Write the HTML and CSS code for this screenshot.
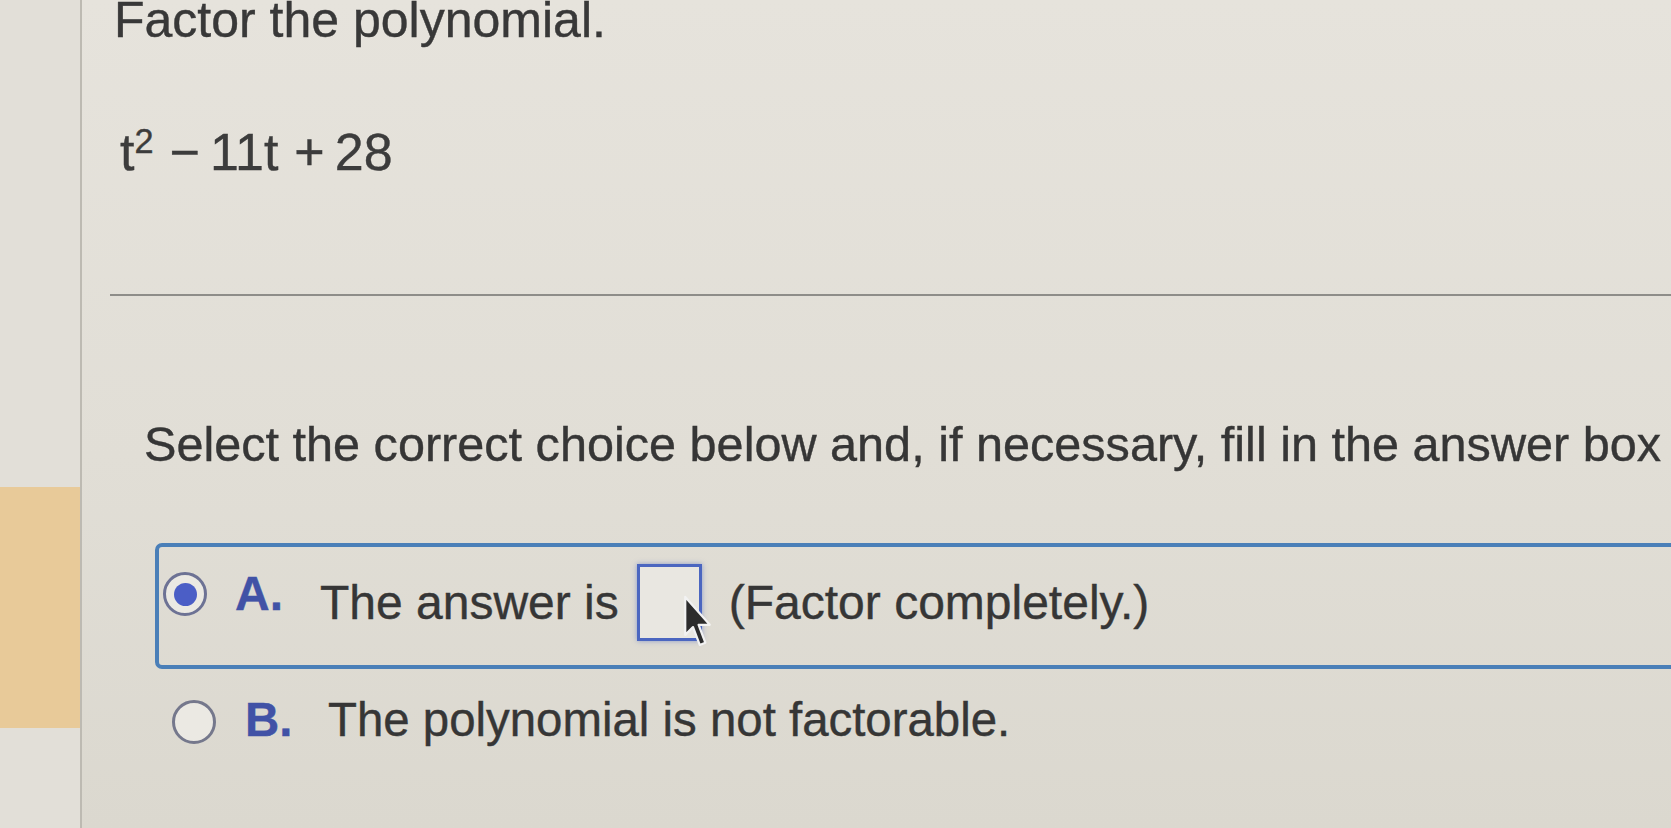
FILE: index.html
```html
<!DOCTYPE html>
<html lang="en">
<head>
    <meta charset="UTF-8">
    <meta name="viewport" content="width=device-width, initial-scale=1.0">
    <title>Factor the polynomial</title>
    <link rel="stylesheet" href="styles.css">
</head>
<body>
    <div class="page">
        <div class="side">
            <div class="side-mark"></div>
        </div>

        <div class="question">
            <h1 class="prompt">Factor the polynomial.</h1>

            <p class="expr">t<sup>2</sup><span class="op">−</span>11t<span class="op">+</span>28</p>

            <hr class="divider">

            <p class="instructions">Select the correct choice below and, if necessary, fill in the answer box</p>

            <div class="choice choice-selected">
                <span class="radio radio-on"><span class="radio-dot"></span></span>
                <span class="choice-letter">A.</span>
                <span class="choice-text">The answer is</span>
                <span class="answer-box">
                    <svg class="cursor" viewBox="0 0 13 24" width="29" height="55">
                        <path d="M1 1 L1 18 L4.5 14.5 L7.5 22.5 L10 21.5 L7 13.5 L12 13.5 Z" fill="#2c2c2c" stroke="#f2f2f2" stroke-width="1" stroke-linejoin="round"/>
                    </svg>
                </span>
                <span class="choice-text">(Factor completely.)</span>
            </div>

            <div class="choice choice-plain">
                <span class="radio radio-off"></span>
                <span class="choice-letter">B.</span>
                <span class="choice-text">The polynomial is not factorable.</span>
            </div>
        </div>
    </div>
</body>
</html>
```

FILE: styles.css
```css
html, body {
    margin: 0;
    height: 100%;
    overflow: hidden;
}
body {
    font-family: 'Liberation Sans', Arial, sans-serif;
    background: linear-gradient(180deg, #e6e3dc 0%, #e1ded6 55%, #dbd8cf 100%);
    color: #363636;
}
.page {
    display: flex;
    min-height: 100%;
}
.side {
    width: 80px;
    flex-shrink: 0;
    border-right: 2px solid #bdbab2;
    background-color: #e2dfd8;
}
.side-mark {
    margin-top: 487px;
    height: 241px;
    background-color: #e8ca99;
}
.question {
    flex: 1;
    padding-left: 32px;
    min-width: 0;
    -webkit-text-stroke: 0.4px currentColor;
}
.prompt {
    margin: -5px 0 0;
    font-size: 50px;
    line-height: 50px;
    font-weight: normal;
    color: #383838;
}
.expr {
    margin: 81px 0 0;
    padding-left: 6px;
    font-size: 52px;
    line-height: 52px;
    color: #3c3c3c;
}
.expr sup {
    font-size: 0.66em;
    line-height: 0;
    vertical-align: 0.5em;
}
.op {
    margin: 0 10px 0 16px;
}
.divider {
    margin: 116px 0 0 -4px;
    border: none;
    height: 2px;
    background-color: #8e8d89;
}
.instructions {
    margin: 124px 0 0;
    padding-left: 30px;
    font-size: 48.6px;
    line-height: 48px;
    white-space: nowrap;
    color: #363636;
}
.choice {
    display: flex;
    align-items: center;
    margin-left: 41px;
    margin-right: -40px;
    font-size: 48px;
    white-space: nowrap;
    border: 4px solid transparent;
}
.choice-selected {
    margin-top: 75px;
    height: 110px;
    padding: 0 0 8px 4px;
    border-color: #4a7fb8;
    border-radius: 7px;
}
.choice-plain {
    margin-top: 16px;
    height: 60px;
    padding-left: 13px;
    font-size: 47.4px;
}
.radio {
    width: 38px;
    height: 38px;
    border: 3px solid #75788c;
    border-radius: 50%;
    display: flex;
    align-items: center;
    justify-content: center;
    flex-shrink: 0;
    background-color: #ebe9e3;
}
.radio-on {
    border-color: #6d7294;
    margin-bottom: 16px;
}
.radio-off {
    margin-top: 6px;
}
.radio-dot {
    width: 23px;
    height: 23px;
    border-radius: 50%;
    background-color: #4b5ec6;
}
.choice-letter {
    width: 85px;
    margin-left: 28px;
    font-weight: bold;
    color: #4152a6;
}
.choice-selected .choice-letter {
    margin-bottom: 18px;
}
.choice-plain .choice-letter {
    width: 83px;
    margin-left: 29px;
}
.choice-text {
    color: #363636;
}
.answer-box {
    position: relative;
    width: 59px;
    height: 71px;
    margin: 0 27px 0 18px;
    border: 3px solid #4b66c0;
    box-shadow: 0 0 5px rgba(75, 102, 192, 0.55);
    background-color: #e9e7e1;
    flex-shrink: 0;
}
.cursor {
    position: absolute;
    left: 43px;
    top: 27px;
}
```
